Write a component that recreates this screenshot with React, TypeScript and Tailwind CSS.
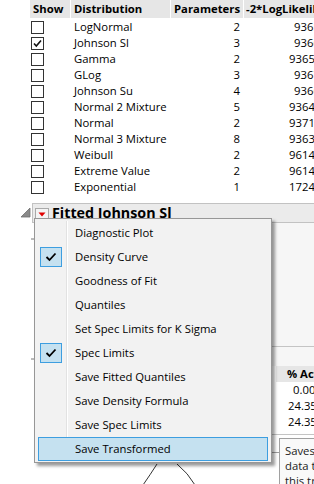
import React from "react";

type Row = { name: string; params: string; checked: boolean; pad: string; value: string };

const rows: Row[] = [
  { name: "LogNormal", params: "2", checked: false, pad: "pl-[50px]", value: "9365.48" },
  { name: "Johnson Sl", params: "3", checked: true, pad: "pl-[50px]", value: "9366.12" },
  { name: "Gamma", params: "2", checked: false, pad: "pl-[45px]", value: "9365.903" },
  { name: "GLog", params: "3", checked: false, pad: "pl-[50px]", value: "9367.41" },
  { name: "Johnson Su", params: "4", checked: false, pad: "pl-[50px]", value: "9366.08" },
  { name: "Normal 2 Mixture", params: "5", checked: false, pad: "pl-[45px]", value: "9364.557" },
  { name: "Normal", params: "2", checked: false, pad: "pl-[45px]", value: "9371.228" },
  { name: "Normal 3 Mixture", params: "8", checked: false, pad: "pl-[45px]", value: "9363.914" },
  { name: "Weibull", params: "2", checked: false, pad: "pl-[45px]", value: "9614.302" },
  { name: "Extreme Value", params: "2", checked: false, pad: "pl-[45px]", value: "9614.302" },
  { name: "Exponential", params: "1", checked: false, pad: "pl-[45px]", value: "17242.55" },
];

const menuItems: { label: string; checked?: boolean; selected?: boolean }[] = [
  { label: "Diagnostic Plot" },
  { label: "Density Curve", checked: true },
  { label: "Goodness of Fit" },
  { label: "Quantiles" },
  { label: "Set Spec Limits for K Sigma" },
  { label: "Spec Limits", checked: true },
  { label: "Save Fitted Quantiles" },
  { label: "Save Density Formula" },
  { label: "Save Spec Limits" },
  { label: "Save Transformed", selected: true },
];

function CheckBox({ checked }: { checked: boolean }) {
  return (
    <div className="w-[13px] h-[13px] border border-[#333333] bg-white flex items-center justify-center">
      {checked && (
        <svg width="11" height="11" viewBox="0 0 11 11">
          <path d="M2 5.5 L4.3 8 L9 2.5" fill="none" stroke="#111" strokeWidth="1.6" />
        </svg>
      )}
    </div>
  );
}

export default function App() {
  return (
    <div className="relative w-[314px] h-[484px] overflow-hidden bg-white text-black font-['Open_Sans',sans-serif] text-[11.3px]">
      {/* Table */}
      <div className="ml-[30px] w-[400px]">
        <div className="grid grid-cols-[40px_99px_72px_180px] gap-x-px h-[18px] font-bold">
          <div className="bg-[#e6e6e6] pl-[3px] leading-[18px]">Show</div>
          <div className="bg-[#e6e6e6] pl-[3px] leading-[18px]">Distribution</div>
          <div className="bg-[#e6e6e6] pr-[3px] text-right leading-[18px]">Parameters</div>
          <div className="bg-[#e6e6e6] pl-[2px] leading-[18px]">-2*LogLikelihood</div>
        </div>
        <div className="mt-px">
          {rows.map((r) => (
            <div key={r.name} className="grid grid-cols-[40px_99px_72px_180px] gap-x-px h-[16px] items-center">
              <div className="pl-[1px]">
                <CheckBox checked={r.checked} />
              </div>
              <div className="pl-[3px] leading-[16px] whitespace-nowrap">{r.name}</div>
              <div className="pr-[3px] text-right leading-[16px]">{r.params}</div>
              <div className={`${r.pad} leading-[16px]`}>{r.value}</div>
            </div>
          ))}
        </div>
      </div>

      {/* Outline header */}
      <div className="mt-[8px] flex h-[20px]">
        <div className="w-[32px] shrink-0 relative">
          <svg className="absolute left-[20px] top-[4px]" width="11" height="11" viewBox="0 0 11 11">
            <path d="M1 10 L10 10 L10 1 Z" fill="#8a8a8a" stroke="#6e6e6e" strokeWidth="0.8" />
          </svg>
        </div>
        <div className="flex-1 flex items-center bg-[#ebebeb] border-t border-b border-l border-[#c2c2c2]">
          <div className="ml-[2px] w-[14px] h-[12px] mt-[2px] border border-[#a9a9a9] bg-[#f4f4f4] flex items-center justify-center">
            <svg width="8" height="5" viewBox="0 0 8 5">
              <path d="M0.5 0.5 L7.5 0.5 L4 4.5 Z" fill="#e00000" />
            </svg>
          </div>
          <div className="ml-[3px] font-bold text-[14.3px] leading-[18px] whitespace-nowrap">Fitted Johnson Sl</div>
        </div>
      </div>

      {/* Content under header */}
      <div className="flex h-[262px]">
        <div className="w-[272px] shrink-0 relative">
          <svg className="absolute left-0 top-0" width="272" height="262" viewBox="0 0 272 262">
            <line x1="31" y1="16" x2="34" y2="16" stroke="#777" strokeWidth="1" />
            <line x1="31" y1="136" x2="34" y2="136" stroke="#777" strokeWidth="1" />
            <path d="M143 262 Q150 252 157 241" fill="none" stroke="#333" strokeWidth="1" />
            <path d="M177 241 Q188 250 195 262" fill="none" stroke="#333" strokeWidth="1" />
          </svg>
        </div>
        <div className="flex-1 min-w-0 overflow-hidden flex flex-col">
          <div className="h-[123px] shrink-0 bg-[#f6f6f6]" />
          <div className="h-[20px] shrink-0 bg-[#f6f6f6] border-t border-[#c4c4c4]" />
          <div className="ml-[4px] h-[16px] shrink-0 bg-[#e6e6e6] font-bold pl-[11px] leading-[16px] whitespace-nowrap">% Actual</div>
          <div className="ml-[4px] h-[16px] shrink-0 pl-[17px] leading-[16px] whitespace-nowrap">0.000</div>
          <div className="ml-[4px] h-[16px] shrink-0 pl-[12px] leading-[16px] whitespace-nowrap">24.35</div>
          <div className="ml-[4px] h-[16px] shrink-0 pl-[12px] leading-[16px] whitespace-nowrap">24.35</div>
          <div className="h-[4px] shrink-0" />
          <div className="border-t border-[#c4c4c4] h-[4px] shrink-0" />
          <div className="flex flex-1 min-h-0">
            <div className="w-[7px] shrink-0 relative">
              <div className="absolute left-0 right-0 top-[14px] border-t border-[#a0a0a0]" />
            </div>
            <div className="flex-1 min-w-0 border-l border-t border-[#a0a0a0] bg-[#f9f9f9] pl-[5px] pt-[4px] leading-[15px] text-[#222] whitespace-nowrap">
              <div>Saves the</div>
              <div>data transformed</div>
              <div>this transform</div>
            </div>
          </div>
        </div>
      </div>

      {/* Popup menu */}
      <div className="absolute left-[34px] top-[218px] w-[238px] h-[245px] bg-[#f2f2f2] border border-[#979797] shadow-[3px_3px_3px_rgba(0,0,0,0.4)] pt-[2px] px-[3px]">
        <div className="absolute left-[31px] top-[2px] bottom-[2px] w-px bg-[#e2e2e2]" />
        <div className="absolute left-[32px] top-[2px] bottom-[2px] w-px bg-white" />
        {menuItems.map((m) => (
          <div
            key={m.label}
            className={`relative h-[24px] flex items-center ${
              m.selected ? "bg-[#c5e1f0] border border-[#3d9ee0]" : "border border-transparent"
            }`}
          >
            <div className="w-[36px] flex items-center pl-[1px]">
              {m.checked && (
                <div className="w-[22px] h-[20px] bg-[#c5e1f0] border border-[#3d9ee0] flex items-center justify-center">
                  <svg width="12" height="10" viewBox="0 0 12 10">
                    <path d="M1.5 5 L4.5 8 L10.5 1.5" fill="none" stroke="#000" strokeWidth="1.8" />
                  </svg>
                </div>
              )}
            </div>
            <div className="whitespace-nowrap leading-[16px]">{m.label}</div>
          </div>
        ))}
      </div>
    </div>
  );
}
